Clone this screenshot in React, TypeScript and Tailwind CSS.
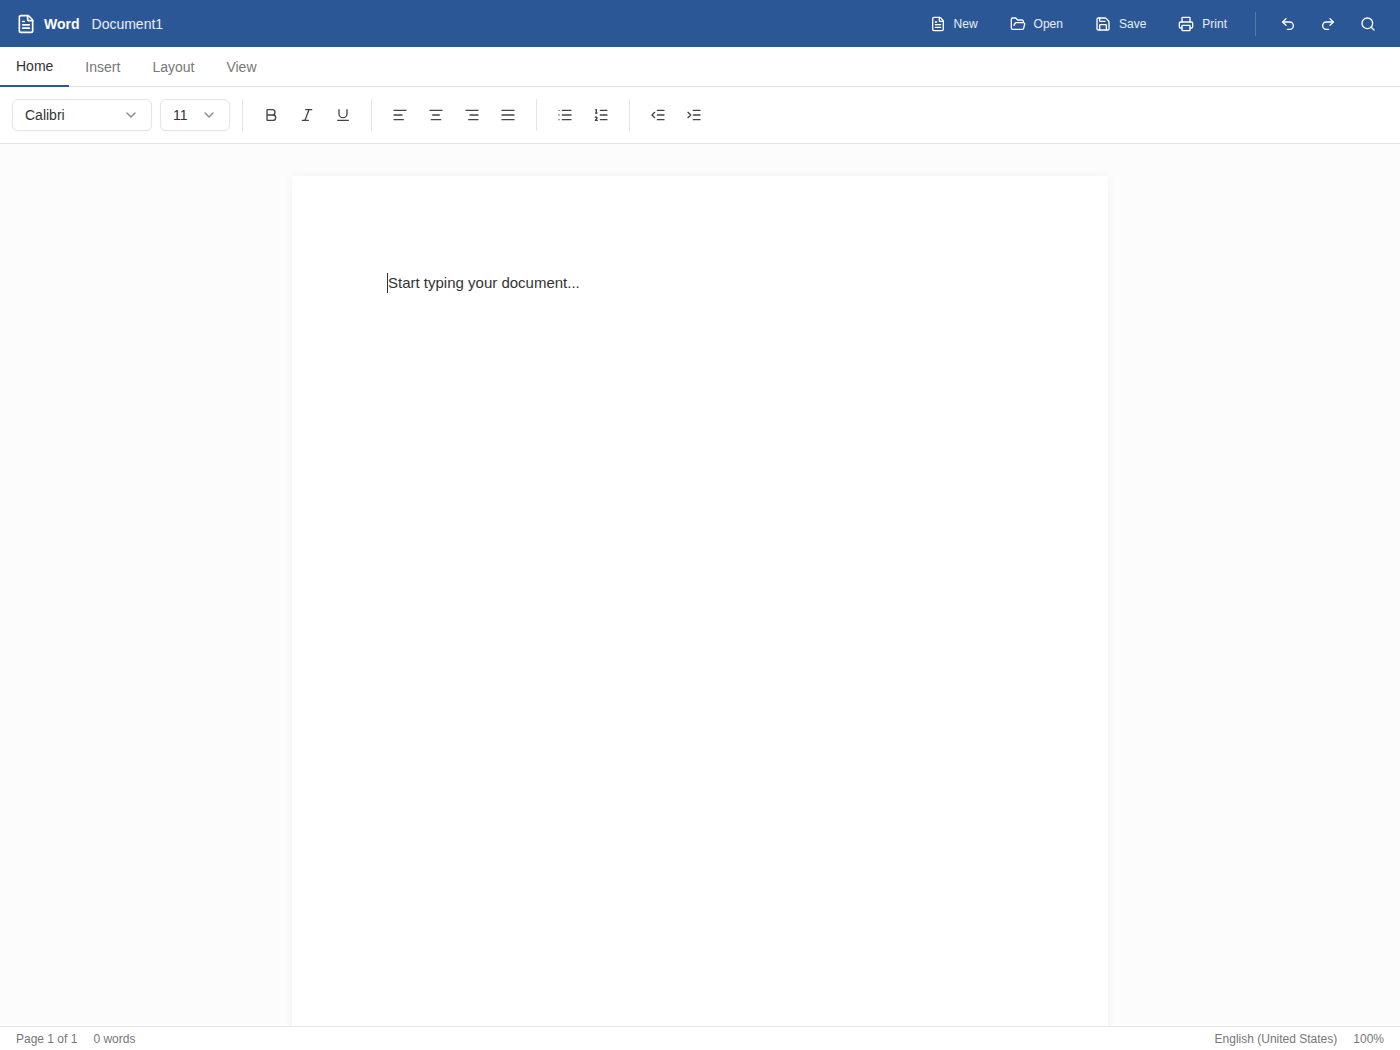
import React from "react";
import {
  FileText, FolderOpen, Save, Printer, Undo2, Redo2, Search, ChevronDown, Bold, Italic, Underline,
  AlignLeft, AlignCenter, AlignRight, AlignJustify, List, ListOrdered, Outdent, Indent,
} from "lucide-react";

function HeaderAction({ icon: Icon, label }: { icon: React.ElementType; label: string }) {
  return (
    <button className="flex h-8 items-center gap-2 rounded px-3 text-xs text-white/90">
      <Icon size={16} strokeWidth={2} className="text-white" />
      <span>{label}</span>
    </button>
  );
}

function HeaderIcon({ icon: Icon }: { icon: React.ElementType }) {
  return (
    <button className="flex h-8 w-8 items-center justify-center rounded text-white">
      <Icon size={16} strokeWidth={2} />
    </button>
  );
}

function ToolButton({ icon: Icon }: { icon: React.ElementType }) {
  return (
    <button className="flex h-8 w-8 items-center justify-center rounded text-[#444444]">
      <Icon size={16} strokeWidth={2} />
    </button>
  );
}

function Divider() {
  return <div className="h-8 w-px bg-[#e5e5e5]" />;
}

export default function App() {
  return (
    <div className="flex h-[1050px] w-full flex-col overflow-hidden bg-white font-['Liberation_Sans',Arial,sans-serif]">
      <header className="flex h-[47px] shrink-0 items-center justify-between bg-[#2b5797] pl-4 pr-4 text-white">
        <div className="flex items-center">
          <FileText size={20} strokeWidth={2} />
          <span className="ml-2 text-sm font-bold">Word</span>
          <span className="ml-3 text-sm text-white/90">Document1</span>
        </div>
        <div className="flex items-center gap-2">
          <HeaderAction icon={FileText} label="New" />
          <HeaderAction icon={FolderOpen} label="Open" />
          <HeaderAction icon={Save} label="Save" />
          <HeaderAction icon={Printer} label="Print" />
          <div className="mx-2 h-6 w-px bg-white/20" />
          <HeaderIcon icon={Undo2} />
          <HeaderIcon icon={Redo2} />
          <HeaderIcon icon={Search} />
        </div>
      </header>

      <nav className="flex h-10 shrink-0 items-stretch border-b border-[#e5e5e5] bg-white text-sm">
        <div className="-mb-px flex items-center border-b-2 border-[#2b5797] px-4 text-[#333333]">Home</div>
        <div className="flex items-center px-4 text-[#777777]">Insert</div>
        <div className="flex items-center px-4 text-[#777777]">Layout</div>
        <div className="flex items-center px-4 text-[#777777]">View</div>
      </nav>

      <div className="flex h-[57px] shrink-0 items-center gap-3 border-b border-[#e5e5e5] bg-white px-3">
        <div className="flex items-center gap-2">
          <div className="flex h-8 w-[140px] items-center justify-between rounded-md border border-[#e5e5e5] bg-white pl-3 pr-3 text-sm text-[#333333] shadow-[0_1px_2px_rgba(0,0,0,0.04)]">
            <span>Calibri</span>
            <ChevronDown size={16} className="text-[#888888]" />
          </div>
          <div className="flex h-8 w-[70px] items-center justify-between rounded-md border border-[#e5e5e5] bg-white pl-3 pr-3 text-sm text-[#333333] shadow-[0_1px_2px_rgba(0,0,0,0.04)]">
            <span>11</span>
            <ChevronDown size={16} className="text-[#888888]" />
          </div>
        </div>
        <Divider />
        <div className="flex items-center gap-1">
          <ToolButton icon={Bold} />
          <ToolButton icon={Italic} />
          <ToolButton icon={Underline} />
        </div>
        <Divider />
        <div className="flex items-center gap-1">
          <ToolButton icon={AlignLeft} />
          <ToolButton icon={AlignCenter} />
          <ToolButton icon={AlignRight} />
          <ToolButton icon={AlignJustify} />
        </div>
        <Divider />
        <div className="flex items-center gap-1">
          <ToolButton icon={List} />
          <ToolButton icon={ListOrdered} />
        </div>
        <Divider />
        <div className="flex items-center gap-1">
          <ToolButton icon={Outdent} />
          <ToolButton icon={Indent} />
        </div>
      </div>

      <main className="flex min-h-0 flex-1 justify-center overflow-hidden bg-[#fcfcfc] pt-8">
        <div className="h-[1056px] w-[816px] shrink-0 bg-white p-24 shadow-[0_0_10px_rgba(0,0,0,0.05)]">
          <p className="border-l border-[#333333] text-[15px] leading-[20px] text-[#333333] -ml-px w-fit mt-[1px]">Start typing your document...</p>
        </div>
      </main>

      <footer className="flex h-6 shrink-0 items-center justify-between border-t border-[#e5e5e5] bg-white px-4 text-xs text-[#777777]">
        <div className="flex gap-4">
          <span>Page 1 of 1</span>
          <span>0 words</span>
        </div>
        <div className="flex gap-4">
          <span>English (United States)</span>
          <span>100%</span>
        </div>
      </footer>
    </div>
  );
}
